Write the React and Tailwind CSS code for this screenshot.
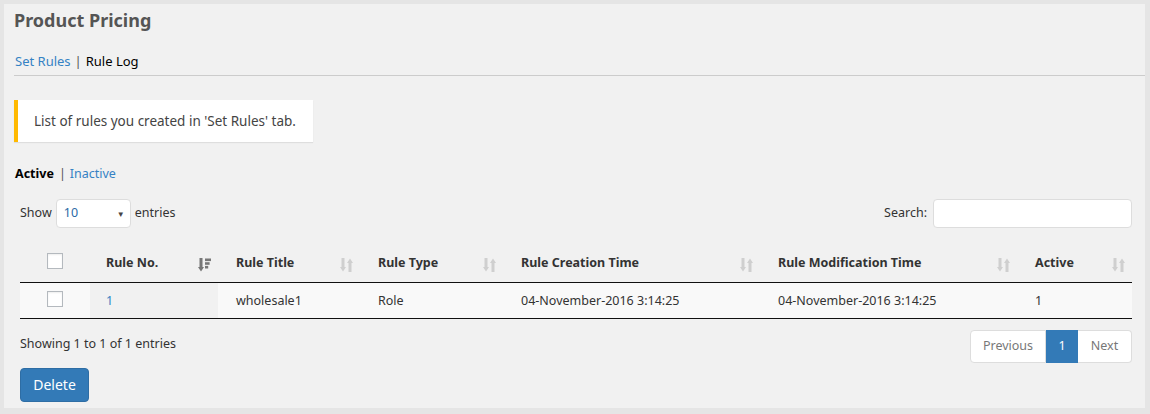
import React from "react";

const SortIcon = ({ active }) =>
  active ? (
    <svg width="13" height="14" viewBox="0 0 13 14" className="text-[#777]">
      <path d="M1.5 0h3v9H6l-3 4.5L0 9h1.5z" fill="currentColor" />
      <rect x="7" y="0.5" width="6" height="2.6" fill="currentColor" />
      <rect x="7" y="4.2" width="4.6" height="2.6" fill="currentColor" />
      <rect x="7" y="7.9" width="3.2" height="2.6" fill="currentColor" />
    </svg>
  ) : (
    <svg width="13" height="14" viewBox="0 0 13 14" className="text-[#cfcfcf]">
      <path d="M1.5 0h3v9H6l-3 4.5L0 9h1.5z" fill="currentColor" />
      <path d="M8.5 14h3V5H13L10 0.5 7 5h1.5z" fill="currentColor" />
    </svg>
  );

const Checkbox = () => (
  <span className="inline-block w-4 h-4 bg-white border border-[#b4b9be] shadow-[inset_0_1px_2px_rgba(0,0,0,0.07)]" />
);

const columns = [
  { label: "Rule No.", w: "w-[128px]", active: true },
  { label: "Rule Title", w: "w-[142px]" },
  { label: "Rule Type", w: "w-[143px]" },
  { label: "Rule Creation Time", w: "w-[257px]" },
  { label: "Rule Modification Time", w: "w-[257px]" },
  { label: "Active", w: "w-[115px]" },
];

const row = ["1", "wholesale1", "Role", "04-November-2016 3:14:25", "04-November-2016 3:14:25", "1"];

export default function App() {
  return (
    <div className="w-[1150px] h-[414px] bg-[#e5e5e5] pt-1 pl-1 pr-[5px] pb-[6px] font-['Noto_Sans',sans-serif] text-[13px] text-[#444]">
      <div className="h-full bg-[#f1f1f1] pl-[10px]">
        <h1 className="pt-[3px] text-[18px] font-bold text-[#555] leading-[26px]">
          Product Pricing
        </h1>
        <div className="mt-[20px] flex items-center h-[18px] pl-[1px] text-[13px] border-b border-[#ccc] pb-[4px] box-content">
          <a className="text-[#3582c4]">Set Rules</a>
          <span className="mx-[4px] text-[#555]">|</span>
          <span className="text-black">Rule Log</span>
        </div>

        <div className="mt-[24px] w-[299px] h-[42px] bg-white border-l-4 border-[#ffb900] shadow-[0_1px_1px_rgba(0,0,0,0.08)] flex items-center pl-[16px] text-[13.5px] text-[#444]">
          List of rules you created in 'Set Rules' tab.
        </div>

        <div className="mt-[24px] flex items-center h-[16px] pl-[1px] text-[12.5px]">
          <span className="font-bold text-black">Active</span>
          <span className="ml-[5px] mr-[4px] text-[#555]">|</span>
          <a className="text-[#3582c4]">Inactive</a>
        </div>

        <div className="mt-[17px] ml-[6px] mr-[13px]">
          <div className="flex items-center justify-between h-[29px]">
            <div className="flex items-center gap-[4px] text-[12.5px] text-[#333]">
              <span>Show</span>
              <div className="w-[75px] h-[29px] bg-white border border-[#ddd] rounded-[4px] flex items-center justify-between pl-[7px] pr-[5px]">
                <span className="text-[#2c6aa6] text-[12.5px]">10</span>
                <span className="text-[8px] text-[#444]">▼</span>
              </div>
              <span>entries</span>
            </div>
            <div className="flex items-center gap-[6px] text-[12.5px] text-[#333]">
              <span>Search:</span>
              <div className="w-[199px] h-[29px] bg-white border border-[#ddd] rounded-[4px]" />
            </div>
          </div>

          <table className="mt-[13px] w-full border-collapse table-fixed">
            <thead>
              <tr className="h-[41px] border-b border-[#111]">
                <th className="w-[70px] text-center align-middle pt-[4px]">
                  <Checkbox />
                </th>
                {columns.map((c) => (
                  <th
                    key={c.label}
                    className={`${c.w} text-left font-bold text-[12.5px] text-[#333] pt-[4px] ${c.active ? "pl-[16px]" : "pl-[18px]"} pr-[7px]`}
                  >
                    <div className="flex items-center justify-between">
                      <span>{c.label}</span>
                      <span className="pt-[4px]">
                        <SortIcon active={c.active} />
                      </span>
                    </div>
                  </th>
                ))}
              </tr>
            </thead>
            <tbody>
              <tr className="h-[36px] bg-[#f9f9f9] border-b border-[#111]">
                <td className="text-center align-middle pt-[3px]">
                  <Checkbox />
                </td>
                {row.map((v, i) => (
                  <td
                    key={i}
                    className={
                      i === 0
                        ? "bg-[#f1f1f1] pl-[16px] pt-[3px] text-[12.5px] text-[#3582c4]"
                        : "pl-[18px] pt-[3px] text-[12.5px] text-[#333]"
                    }
                  >
                    {v}
                  </td>
                ))}
              </tr>
            </tbody>
          </table>

          <div className="flex items-start justify-between mt-[11px]">
            <div className="pt-[5px] text-[12.5px] text-[#333]">Showing 1 to 1 of 1 entries</div>
            <div className="flex h-[33px] text-[12.5px]">
              <span className="w-[76px] flex items-center justify-center bg-white border border-[#ddd] rounded-l-[4px] text-[#777]">
                Previous
              </span>
              <span className="w-[32px] flex items-center justify-center bg-[#337ab7] border border-[#337ab7] text-white">
                1
              </span>
              <span className="w-[54px] flex items-center justify-center bg-white border border-l-0 border-[#ddd] rounded-r-[4px] text-[#777]">
                Next
              </span>
            </div>
          </div>

          <button className="mt-[5px] w-[69px] h-[34px] bg-[#337ab7] border border-[#2e6da4] rounded-[4px] text-white text-[14px]">
            Delete
          </button>
        </div>
      </div>
    </div>
  );
}
